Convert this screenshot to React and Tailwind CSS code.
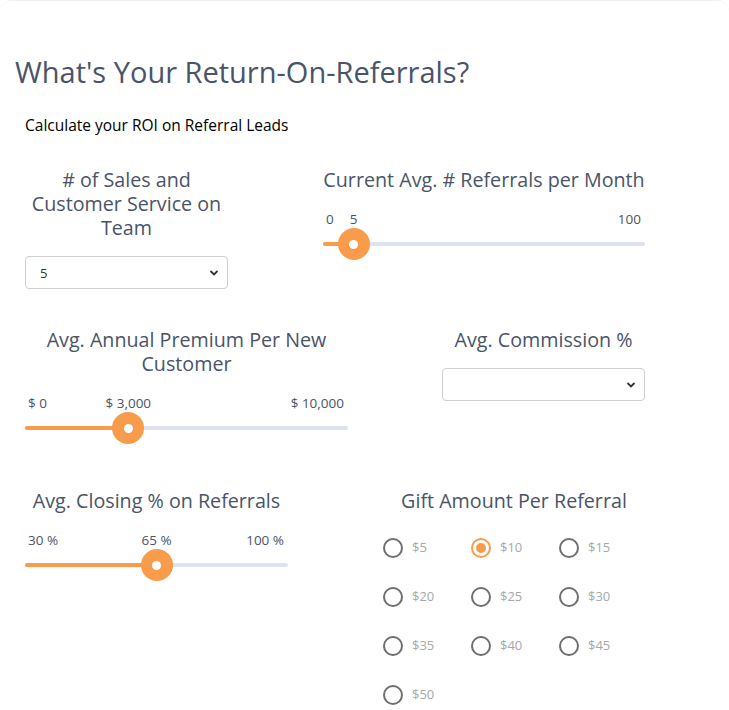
import { useState } from "react";

const font = { fontFamily: '"Open Sans", "Noto Sans", sans-serif' };

const Slider = ({ width, min, max, value, format }) => {
  const pct = (value - min) / (max - min);
  // thumb is 32px wide, so its center runs from 16 to width-16
  const center = 16 + (width - 32) * pct;
  return (
    <div className="relative" style={{ width }}>
      <div className="relative h-[18px] text-[13.5px] leading-[18px] text-[#4a5468]">
        <span className="absolute left-[3px] top-0">{format(min)}</span>
        <span
          className="absolute top-0 -translate-x-1/2 whitespace-nowrap"
          style={{ left: center }}
        >
          {format(value)}
        </span>
        <span className="absolute right-[4px] top-0">{format(max)}</span>
      </div>
      <div className="relative h-8">
        <div className="absolute left-0 right-0 top-[14px] h-1 rounded-full bg-[#dde3f1]" />
        <div
          className="absolute left-0 top-[14px] h-1 rounded-full bg-[#f89c4c]"
          style={{ width: center }}
        />
        <div
          className="absolute top-0 flex h-8 w-8 -translate-x-1/2 items-center justify-center rounded-full bg-[#f89c4c]"
          style={{ left: center }}
        >
          <div className="h-[9px] w-[9px] rounded-full bg-white" />
        </div>
      </div>
    </div>
  );
};

const Select = ({ value }) => (
  <div className="relative h-[33px] w-[203px] rounded-[4px] border border-[#cfcfcf] bg-white">
    <span className="absolute left-[14px] top-[7px] text-[13px] text-[#333]">{value}</span>
    <svg
      className="absolute right-[8px] top-[12px]"
      width="10"
      height="8"
      viewBox="0 0 10 8"
      fill="none"
    >
      <path d="M1.5 2 L5 5.5 L8.5 2" stroke="#333" strokeWidth="1.8" />
    </svg>
  </div>
);

const Heading = ({ children, className = "" }) => (
  <h3 className={`text-center text-[19.7px] leading-6 text-[#4a5468] ${className}`}>{children}</h3>
);

const gifts = [5, 10, 15, 20, 25, 30, 35, 40, 45, 50];

const App = () => {
  const [gift, setGift] = useState(10);

  return (
    <div className="min-h-[710px] bg-white" style={font}>
      <div className="min-h-[710px] rounded-t-xl border-t border-[#f2f2f2]">
        <h1 className="px-[15px] pt-[51px] text-[29px] leading-10 text-[#4a5468]">
          What's Your Return-On-Referrals?
        </h1>

        <div className="w-[645px] pl-[25px]">
          <p className="mt-[23px] text-[15.5px] leading-5 text-black">
            Calculate your ROI on Referral Leads
          </p>

          {/* row 1 */}
          <div className="mt-[33px] flex items-start justify-between">
            <div className="w-[203px]">
              <Heading>
                # of Sales and Customer Service on Team
              </Heading>
              <div className="mt-4">
                <Select value="5" />
              </div>
            </div>
            <div className="w-[322px]">
              <Heading className="whitespace-nowrap">Current Avg. # Referrals per Month</Heading>
              <div className="mt-[18px]">
                <Slider width={322} min={0} max={100} value={5} format={(v) => v} />
              </div>
            </div>
          </div>

          {/* row 2 */}
          <div className="mt-[39px] flex items-start justify-between">
            <div className="w-[323px]">
              <Heading className="px-3">Avg. Annual Premium Per New Customer</Heading>
              <div className="mt-[18px]">
                <Slider
                  width={323}
                  min={0}
                  max={10000}
                  value={3000}
                  format={(v) => `$ ${v.toLocaleString("en-US")}`}
                />
              </div>
            </div>
            <div className="w-[203px]">
              <Heading>Avg. Commission %</Heading>
              <div className="mt-4">
                <Select value="" />
              </div>
            </div>
          </div>

          {/* row 3 */}
          <div className="mt-[45px] flex items-start justify-between">
            <div className="w-[263px]">
              <Heading className="whitespace-nowrap">Avg. Closing % on Referrals</Heading>
              <div className="mt-[18px]">
                <Slider width={263} min={30} max={100} value={65} format={(v) => `${v} %`} />
              </div>
            </div>
            <div className="w-[262px]">
              <Heading className="whitespace-nowrap">Gift Amount Per Referral</Heading>
              <div className="mt-[25px] grid grid-cols-[88px_88px_86px] gap-y-[29px]">
                {gifts.map((g) => {
                  const checked = g === gift;
                  return (
                    <label
                      key={g}
                      className="flex h-5 cursor-pointer items-center gap-[9px]"
                      onClick={() => setGift(g)}
                    >
                      <span
                        className={`flex h-5 w-5 items-center justify-center rounded-full border-2 ${
                          checked ? "border-[#f89c4c]" : "border-[#6f6f6f]"
                        }`}
                      >
                        {checked && <span className="h-[10px] w-[10px] rounded-full bg-[#f89c4c]" />}
                      </span>
                      <span className="text-[13px] text-[#a8a8a8]">${g}</span>
                    </label>
                  );
                })}
              </div>
            </div>
          </div>
        </div>
      </div>
    </div>
  );
};

export default App;
